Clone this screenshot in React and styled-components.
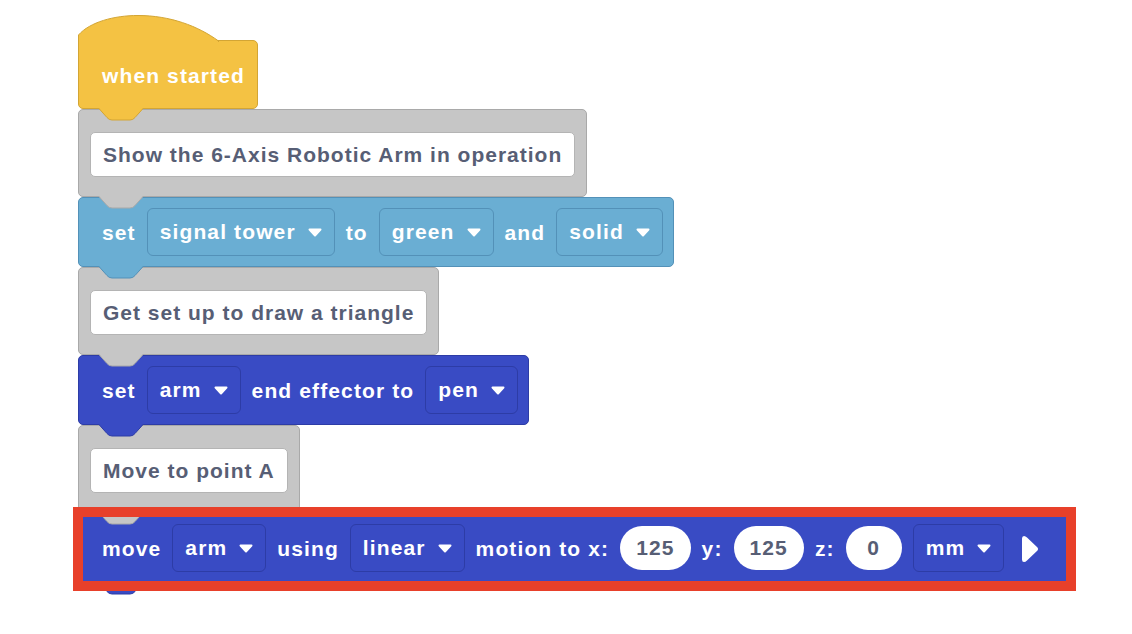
import React from "react";
import styled, { createGlobalStyle } from "styled-components";

const GlobalStyle = createGlobalStyle`
  html, body {
    margin: 0;
    padding: 0;
    background: #ffffff;
  }
  body {
    font-family: "Liberation Sans", Arial, sans-serif;
  }
`;

const palette = {
  hat: { fill: "#f4c243", edge: "#d3a534" },
  comment: { fill: "#c6c6c6", edge: "#a9a9a9" },
  looks: { fill: "#6aaed3", edge: "#5391b8" },
  motion: { fill: "#394bc4", edge: "#2d3ca6" },
};

const Canvas = styled.div`
  width: 1132px;
  height: 634px;
  padding: 40px 0 0 78px;
  box-sizing: border-box;
  overflow: hidden;
`;

const Stack = styled.div`
  display: flex;
  flex-direction: column;
  align-items: flex-start;
`;

const BlockShell = styled.div`
  position: relative;
  box-sizing: border-box;
  display: flex;
  align-items: center;
  gap: 11px;
  background: ${(p) => palette[p.$kind].fill};
  border: 1px solid ${(p) => palette[p.$kind].edge};
  border-radius: 5px;
  color: #ffffff;
  font-size: 21px;
  font-weight: 700;
  letter-spacing: 1.12px;
  white-space: nowrap;
`;

const HatBlock = styled(BlockShell)`
  width: 180px;
  height: 69px;
  padding: 2px 0 0 23px;
  border-top-left-radius: 0;
`;

const CommandBlock = styled(BlockShell)`
  height: 70px;
  padding: 1px ${(p) => (p.$wide ? "31px" : "10px")} 0 23px;
`;

const CommentBlock = styled(BlockShell)`
  padding: 22px 11px 19px 11px;
`;

const Note = styled.div`
  height: 45px;
  box-sizing: border-box;
  display: flex;
  align-items: center;
  padding: 1px 12px 0;
  background: #ffffff;
  border: 1px solid #b4b4b4;
  border-radius: 5px;
  color: #575e75;
  letter-spacing: 1px;
`;

const Dropdown = styled.div`
  height: 48px;
  box-sizing: border-box;
  display: flex;
  align-items: center;
  gap: 12px;
  padding: 0 12px;
  margin-top: -1px;
  border: 1px solid ${(p) => palette[p.$kind].edge};
  border-radius: 6px;
`;

const NumberField = styled.div`
  height: 44px;
  min-width: 56px;
  box-sizing: border-box;
  display: flex;
  align-items: center;
  justify-content: center;
  padding: 0 16px;
  margin-top: -1px;
  background: #ffffff;
  border-radius: 22px;
  color: #575e75;
`;

const TabSvg = styled.svg`
  position: absolute;
  left: 19px;
  bottom: -13px;
  z-index: 2;
  overflow: visible;
`;

const DomeSvg = styled.svg`
  position: absolute;
  left: -1px;
  top: -27px;
  overflow: visible;
`;

const SelectFrame = styled.div`
  position: absolute;
  top: -7px;
  left: -6px;
  right: -6px;
  bottom: -9px;
  border: 10px solid #e8402a;
  z-index: 3;
  pointer-events: none;
`;

const PlayButton = styled.svg`
  margin-left: 6px;
  flex: none;
`;

function Tab({ kind }) {
  const c = palette[kind];
  return (
    <TabSvg width="46" height="13" viewBox="0 0 46 13">
      <path
        d="M0.5 0 L9 9.5 Q11 12 14 12 L32 12 Q35 12 37 9.5 L45.5 0"
        fill={c.fill}
        stroke={c.edge}
        strokeWidth="1"
      />
    </TabSvg>
  );
}

function Dome() {
  const c = palette.hat;
  return (
    <DomeSvg width="141" height="28" viewBox="0 0 141 28">
      <path
        d="M0.5 28 L0.5 21 C12 8 36 1.5 60 1.5 C92 1.5 120 12 140.5 27 L140.5 28"
        fill={c.fill}
        stroke={c.edge}
        strokeWidth="1"
      />
    </DomeSvg>
  );
}

function Caret() {
  return (
    <svg width="14" height="9" viewBox="0 0 14 9">
      <path
        d="M1.5 1.5 H12.5 L7 7.5 Z"
        fill="#ffffff"
        stroke="#ffffff"
        strokeWidth="2"
        strokeLinejoin="round"
      />
    </svg>
  );
}

function Menu({ kind, children }) {
  return (
    <Dropdown $kind={kind}>
      <span>{children}</span>
      <Caret />
    </Dropdown>
  );
}

function Comment({ children }) {
  return (
    <CommentBlock $kind="comment">
      <Note>{children}</Note>
      <Tab kind="comment" />
    </CommentBlock>
  );
}

export default function App() {
  return (
    <>
      <GlobalStyle />
      <Canvas>
        <Stack>
          <HatBlock $kind="hat">
            <Dome />
            <span>when started</span>
            <Tab kind="hat" />
          </HatBlock>

          <Comment>Show the 6-Axis Robotic Arm in operation</Comment>

          <CommandBlock $kind="looks">
            <span>set</span>
            <Menu kind="looks">signal tower</Menu>
            <span>to</span>
            <Menu kind="looks">green</Menu>
            <span>and</span>
            <Menu kind="looks">solid</Menu>
            <Tab kind="looks" />
          </CommandBlock>

          <Comment>Get set up to draw a triangle</Comment>

          <CommandBlock $kind="motion">
            <span>set</span>
            <Menu kind="motion">arm</Menu>
            <span>end effector to</span>
            <Menu kind="motion">pen</Menu>
            <Tab kind="motion" />
          </CommandBlock>

          <Comment>Move to point A</Comment>

          <CommandBlock $kind="motion" $wide>
            <span>move</span>
            <Menu kind="motion">arm</Menu>
            <span>using</span>
            <Menu kind="motion">linear</Menu>
            <span>motion to x:</span>
            <NumberField>125</NumberField>
            <span>y:</span>
            <NumberField>125</NumberField>
            <span>z:</span>
            <NumberField>0</NumberField>
            <Menu kind="motion">mm</Menu>
            <PlayButton width="18" height="28" viewBox="0 0 18 28">
              <path
                d="M3 1 Q1 1 1 3.5 V24.5 Q1 27 3 27 Q4.5 27 6 25.5 L16.5 15.5 Q17.8 14 16.5 12.5 L6 2.5 Q4.5 1 3 1 Z"
                fill="#ffffff"
              />
            </PlayButton>
            <Tab kind="motion" />
            <SelectFrame />
          </CommandBlock>
        </Stack>
      </Canvas>
    </>
  );
}
